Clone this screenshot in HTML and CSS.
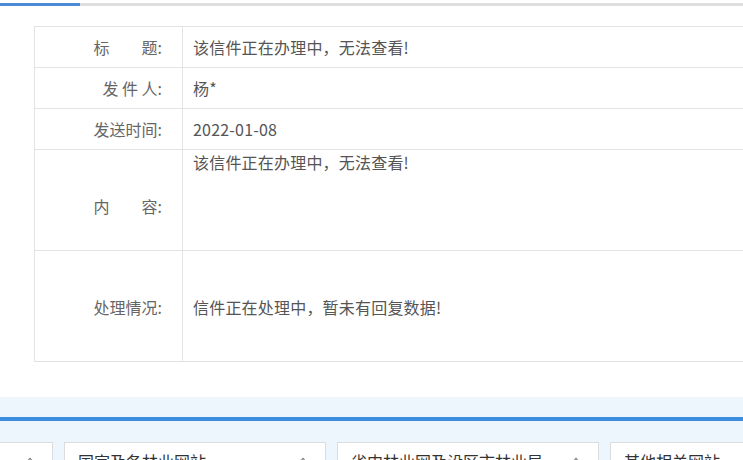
FILE: index.html
```html
<!DOCTYPE html>
<html lang="zh-CN">
<head>
  <meta charset="UTF-8">
  <title>信件详情</title>
  <meta name="viewport" content="width=device-width, initial-scale=1.0">
  <link rel="stylesheet" href="styles.css">
</head>
<body>
  <div class="progress"><div class="progress-bar"></div></div>

  <div class="detail">
    <table class="letter">
      <tr>
        <th>标&emsp;&emsp;题:</th>
        <td>该信件正在办理中，无法查看!</td>
      </tr>
      <tr>
        <th>发 件 人:</th>
        <td>杨*</td>
      </tr>
      <tr>
        <th>发送时间:</th>
        <td>2022-01-08</td>
      </tr>
      <tr class="row-content">
        <th>内&emsp;&emsp;容:</th>
        <td>该信件正在办理中，无法查看!</td>
      </tr>
      <tr class="row-reply">
        <th>处理情况:</th>
        <td>信件正在处理中，暂未有回复数据!</td>
      </tr>
    </table>
  </div>

  <div class="footer">
    <div class="footer-line"></div>
    <div class="links">
      <div class="link-box"><span></span><i class="caret"></i></div>
      <div class="link-box"><span>国家及各林业网站</span><i class="caret"></i></div>
      <div class="link-box"><span>省内林业网及设区市林业局</span><i class="caret"></i></div>
      <div class="link-box"><span>其他相关网站</span><i class="caret"></i></div>
    </div>
  </div>
</body>
</html>
```

FILE: styles.css
```css
html, body { margin: 0; padding: 0; }
body { background: #fff; color: #555; font-family: "Microsoft YaHei", "Noto Sans CJK SC", sans-serif; font-size: 16px; overflow: hidden; width: 743px; height: 460px; }

.progress { height: 3px; margin-top: 3px; background: #dedede; }
.progress-bar { width: 80px; height: 100%; background: #4a8ad6; }

.detail { padding: 20px 0 35px 34px; }
.letter { width: 760px; border-collapse: collapse; border: 1px solid #e3e3e3; }
.letter th, .letter td { border: 1px solid #e3e3e3; height: 40px; padding: 0; }
.letter th { width: 127px; padding-right: 20px; text-align: right; font-weight: normal; color: #666; }
.letter td { padding-left: 10px; color: #555; letter-spacing: 0.2px; }
.row-content th { height: 88px; padding-top: 12px; }
.row-content td { vertical-align: top; line-height: 24px; }
.row-reply th, .row-reply td { height: 108px; padding-top: 2px; }

.footer { background: #eef6fd; padding-top: 20px; height: 60px; }
.footer-line { height: 4px; background: #3a8ddf; }
.links { display: flex; gap: 11px; margin: 21px 0 0 -209px; }
.link-box { flex: 0 0 262px; height: 40px; display: flex; justify-content: space-between; padding: 6px 19px 0 13px; box-sizing: border-box; background: #fff; border: 1px solid #dcdcdc; color: #333; font-size: 16px; }
.caret { width: 5px; height: 5px; margin-top: 10px; border-left: 1px solid #777; border-top: 1px solid #777; transform: rotate(45deg); }
```
